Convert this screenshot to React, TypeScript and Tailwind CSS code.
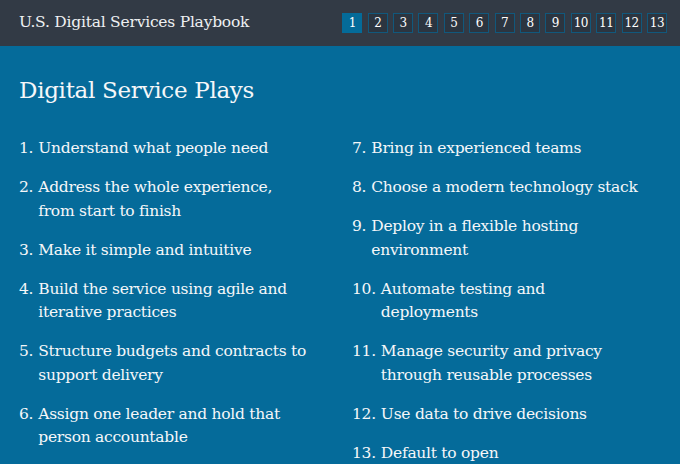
const plays: string[][] = [
  ['Understand what people need'],
  ['Address the whole experience,', 'from start to finish'],
  ['Make it simple and intuitive'],
  ['Build the service using agile and', 'iterative practices'],
  ['Structure budgets and contracts to', 'support delivery'],
  ['Assign one leader and hold that', 'person accountable'],
  ['Bring in experienced teams'],
  ['Choose a modern technology stack'],
  ['Deploy in a flexible hosting', 'environment'],
  ['Automate testing and', 'deployments'],
  ['Manage security and privacy', 'through reusable processes'],
  ['Use data to drive decisions'],
  ['Default to open'],
];

function Play({ n, lines }: { n: number; lines: string[] }) {
  return (
    <li className="flex gap-[5px] text-[15.5px] leading-[23.5px] tracking-[-0.27px] text-[#f5f7f9] whitespace-nowrap">
      <span className="shrink-0">{n}.</span>
      <span className="flex flex-col">
        {lines.map((l, i) => (
          <span key={i}>{l}</span>
        ))}
      </span>
    </li>
  );
}

export default function App() {
  const left = plays.slice(0, 6);
  const right = plays.slice(6);

  return (
    <div className="w-[680px] h-[464px] overflow-hidden bg-[#056b9a] font-['DejaVu_Serif',serif]">
      {/* top bar */}
      <header className="h-[46px] bg-[#323a45] flex items-center justify-between pl-[19px] pr-[13px]">
        <span className="text-[15.5px] tracking-[-0.23px] text-[#eef0f2]">U.S. Digital Services Playbook</span>
        <nav className="flex gap-[5.4px]">
          {plays.map((_, i) => (
            <a
              key={i}
              className={
                i === 0
                  ? 'w-[20px] h-[20px] flex items-center justify-center text-[12px] tracking-[-0.5px] text-white bg-[#046b99] border border-[#046b99]'
                  : 'w-[20px] h-[20px] flex items-center justify-center text-[12px] tracking-[-0.5px] text-white bg-[#2c3540] border border-[#11587c]'
              }
            >
              {i + 1}
            </a>
          ))}
        </nav>
      </header>

      <main className="pl-[19px] pt-[28px]">
        <h1 className="text-[23px] leading-[32px] tracking-[-0.3px] text-[#f5f7f9]">Digital Service Plays</h1>
        <div className="grid grid-cols-[333px_1fr] mt-[31px]">
          <ol className="flex flex-col gap-[15.5px]">
            {left.map((l, i) => (
              <Play key={i} n={i + 1} lines={l} />
            ))}
          </ol>
          <ol className="flex flex-col gap-[15.5px]">
            {right.map((l, i) => (
              <Play key={i} n={i + 7} lines={l} />
            ))}
          </ol>
        </div>
      </main>
    </div>
  );
}
